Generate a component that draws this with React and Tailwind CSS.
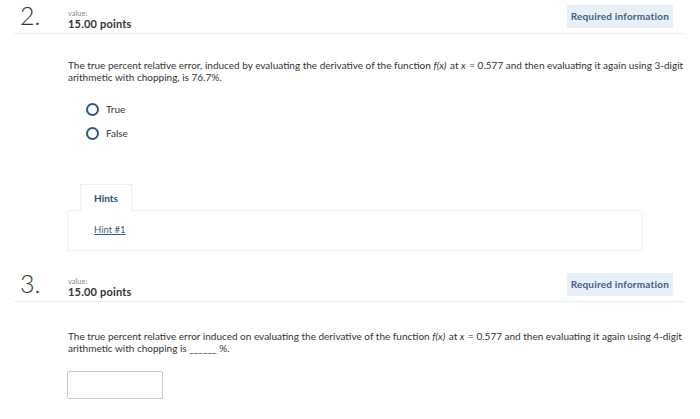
export default function App() {
  const font = { fontFamily: "Lato, 'Open Sans', 'Liberation Sans', sans-serif" };
  const Header = ({ num }) => (
    <div className="mx-[14px] flex items-start border-b border-[#ececec] h-[34px]">
      <div className="w-[54px] pl-[6px] text-[25px] leading-[25px] font-light text-[#333] pt-[3px]">{num}</div>
      <div className="flex flex-col pt-[9px]">
        <span className="text-[7.5px] leading-[9px] text-[#888]">value:</span>
        <span className="text-[11px] leading-[12px] font-bold text-[#333] tracking-[0.2px]">15.00 points</span>
      </div>
      <div className="ml-auto mr-[13px] mt-[5px] h-[23px] px-[4px] flex items-center bg-[#e9eff6] rounded-[2px] text-[10px] font-bold text-[#3d5f86] tracking-[0.2px]">
        Required information
      </div>
    </div>
  );
  const Radio = ({ label }) => (
    <div className="flex items-center gap-[7px] h-[24px]">
      <span className="w-[13px] h-[13px] rounded-full border-2 border-[#2d5584] box-border" />
      <span className="text-[10px] text-[#333]">{label}</span>
    </div>
  );
  const Q = ({ children }) => (
    <p className="pl-[68px] pr-[14px] text-[10px] leading-[12px] text-[#333]">{children}</p>
  );
  return (
    <div className="w-[700px] h-[419px] bg-white overflow-hidden" style={font}>
      <Header num="2." />
      <div className="pt-[25px]">
        <Q>
          The true percent relative error, induced by evaluating the derivative of the function <i className="pr-[1px]">f(x)</i> at <i className="pr-[1px]">x</i> = 0.577 and then evaluating it again using 3-digit arithmetic with chopping, is 76.7%.
        </Q>
      </div>
      <div className="pl-[86px] pt-[14px] flex flex-col">
        <Radio label="True" />
        <Radio label="False" />
      </div>
      <div className="pl-[67px] pt-[38px] w-[643px]">
        <div className="ml-[13px] w-[52px] h-[27px] border border-b-0 border-[#efefef] flex items-center justify-center text-[10px] font-bold text-[#2c4d70] bg-white relative top-[1px]">
          Hints
        </div>
        <div className="h-[41px] border border-[#efefef] rounded-[2px] pl-[26px] flex items-center">
          <span className="text-[9.5px] text-[#3b5b86] underline">Hint #1</span>
        </div>
      </div>
      <div className="pt-[17px]">
        <Header num="3." />
      </div>
      <div className="pt-[28px]">
        <Q>
          The true percent relative error induced on evaluating the derivative of the function <i className="pr-[1px]">f(x)</i> at <i className="pr-[1px]">x</i> = 0.577 and then evaluating it again using 4-digit arithmetic with chopping is ______ %.
        </Q>
      </div>
      <div className="pl-[67px] pt-[17px]">
        <div className="w-[96px] h-[28px] border border-[#c9c9c9] rounded-[2px]" />
      </div>
    </div>
  );
}
